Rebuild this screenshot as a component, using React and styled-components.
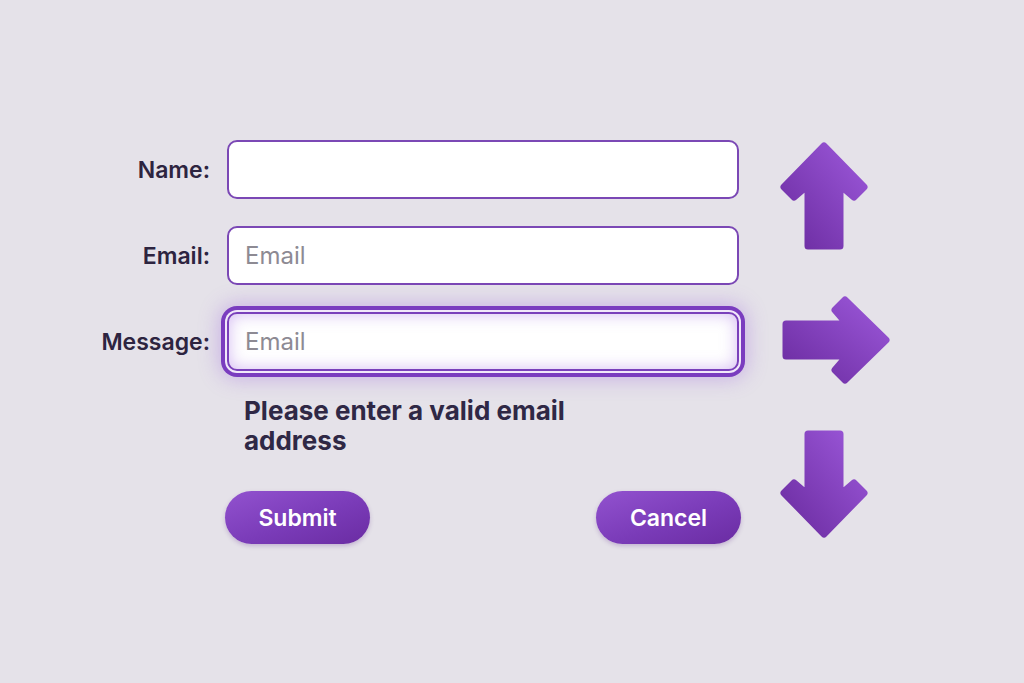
import styled, { createGlobalStyle, css } from 'styled-components'

const GlobalStyle = createGlobalStyle`
    html, body {
        margin: 0;
        padding: 0;
        background: #e5e2e9;
        font-family: Inter, "Noto Sans", "Liberation Sans", sans-serif;
    }
`

// one arrow drawn pointing up, turned for the other directions;
// the gradient is turned back so light always comes from the top right
const ArrowIcon = ({ id, rotate }) => (
    <svg width="88" height="108" viewBox="0 0 88 108">
        <defs>
            <linearGradient
                id={id}
                x1="1" y1="0" x2="0" y2="1"
                gradientTransform={`rotate(${-rotate} 0.5 0.5)`}
            >
                <stop offset="0" stopColor="#9c58da" />
                <stop offset="1" stopColor="#6a2b9f" />
            </linearGradient>
        </defs>
        <path
            d="M44 4 L84 45 L74 55 L60 43 L60 104 L28 104 L28 43 L14 55 L4 45 Z"
            fill={`url(#${id})`}
            stroke={`url(#${id})`}
            strokeWidth="7"
            strokeLinejoin="round"
        />
    </svg>
)

const App = () => {
    return (
        <Page>
            <GlobalStyle />
            <Form>
                <Label>Name:</Label>
                <Field type="text" />
                <Label>Email:</Label>
                <Field type="text" placeholder="Email" />
                <Label>Message:</Label>
                <Field type="text" placeholder="Email" $focused />
                <ErrorText>Please enter a valid email address</ErrorText>
                <Buttons>
                    <Button>Submit</Button>
                    <Button>Cancel</Button>
                </Buttons>
            </Form>
            <Arrows>
                <Arrow $rotate={0}><ArrowIcon id="g-up" rotate={0} /></Arrow>
                <Arrow $rotate={90} $side><ArrowIcon id="g-right" rotate={90} /></Arrow>
                <Arrow $rotate={180}><ArrowIcon id="g-down" rotate={180} /></Arrow>
            </Arrows>
        </Page>
    )
}

const Page = styled.div`
    display: flex;
    align-items: flex-start;
    gap: 41px;
    min-height: 683px;
    box-sizing: border-box;
    padding-top: 140px;
`

const Form = styled.div`
    display: grid;
    grid-template-columns: 210px 512px;
    column-gap: 17px;
    row-gap: 27px;
    align-items: center;
`

const Label = styled.label`
    text-align: right;
    font-size: 23px;
    font-weight: 600;
    color: #2d2440;
`

const Field = styled.input`
    box-sizing: border-box;
    width: 512px;
    height: 59px;
    border: 2px solid #7b48b5;
    border-radius: 10px;
    background: #fff;
    padding: 0 16px;
    font-family: inherit;
    font-size: 24px;
    color: #2d2440;
    outline: none;

    &::placeholder {
        color: #8d8a93;
    }

    ${p => p.$focused && css`
        border: 2px solid #7a40bb;
        box-shadow:
            0 0 0 2px #f1e8fa,
            0 0 0 6px #7a3cbf,
            0 0 20px 8px rgba(150, 90, 220, 0.35),
            inset 0 0 16px rgba(170, 120, 230, 0.5);
    `}
`

const ErrorText = styled.p`
    grid-column: 2;
    margin: -2px 0 0 17px;
    max-width: 380px;
    font-size: 26px;
    line-height: 30px;
    font-weight: 700;
    color: #2f2845;
`

const Buttons = styled.div`
    grid-column: 2;
    display: flex;
    justify-content: space-between;
    margin: 8px -2px 0 -2px;
`

const Button = styled.button`
    width: 145px;
    height: 53px;
    border: none;
    border-radius: 27px;
    background: linear-gradient(160deg, #9252cf 0%, #7a3bb8 55%, #6a2ca2 100%);
    box-shadow: 0 2px 4px rgba(90, 40, 140, 0.25);
    color: #fff;
    font-family: inherit;
    font-size: 23px;
    font-weight: 600;
    cursor: pointer;
`

const Arrows = styled.div`
    display: flex;
    flex-direction: column;
    gap: 46px;
    margin-top: 2px;
`

const Arrow = styled.div`
    display: flex;
    align-items: center;
    justify-content: center;
    width: ${p => (p.$side ? '108px' : '88px')};
    height: ${p => (p.$side ? '88px' : '108px')};
    margin-left: ${p => (p.$side ? '2px' : '0')};

    svg {
        transform: rotate(${p => p.$rotate}deg);
        flex-shrink: 0;
    }
`

export default App
